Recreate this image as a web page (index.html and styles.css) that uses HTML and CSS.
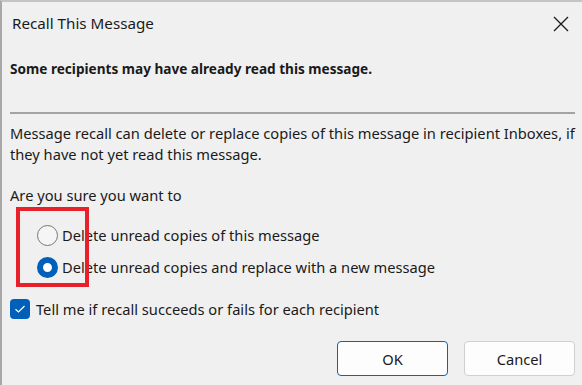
FILE: index.html
```html
<!DOCTYPE html>
<html lang="en">
<head>
    <meta charset="UTF-8">
    <title>Recall This Message</title>
    <link rel="stylesheet" href="styles.css">
</head>
<body>
    <div class="dialog">
        <!-- Title bar -->
        <div class="title-bar">
            <span class="title">Recall This Message</span>
            <svg class="close" width="16" height="16" viewBox="0 0 16 16">
                <path d="M1 1 L15 15 M15 1 L1 15" stroke="#1a1a1a" stroke-width="1.3" fill="none"/>
            </svg>
        </div>

        <div class="content">
            <p class="warning">Some recipients may have already read this message.</p>
            <hr class="sep">
            <p class="info">Message recall can delete or replace copies of this message in recipient Inboxes, if they have not yet read this message.</p>

            <p class="question">Are you sure you want to</p>

            <div class="options">
                <label class="option">
                    <span class="radio"></span>
                    <span>Delete unread copies of this message</span>
                </label>
                <label class="option">
                    <span class="radio checked"></span>
                    <span>Delete unread copies and replace with a new message</span>
                </label>
                <div class="highlight"></div>
            </div>

            <label class="check-row">
                <span class="checkbox">
                    <svg width="12" height="10" viewBox="0 0 12 10">
                        <path d="M1.5 5.2 L4.5 8 L10.5 2" stroke="#fff" stroke-width="1.2" fill="none"/>
                    </svg>
                </span>
                <span>Tell me if recall succeeds or fails for each recipient</span>
            </label>

            <div class="buttons">
                <button class="btn btn-default">OK</button>
                <button class="btn">Cancel</button>
            </div>
        </div>
    </div>
</body>
</html>
```

FILE: styles.css
```css
* {
    margin: 0;
    padding: 0;
    box-sizing: border-box;
}

body {
    font-family: "Noto Sans", "Open Sans", sans-serif;
    font-size: 14.67px;
    color: #1a1a1a;
    background-color: #f0f0f0;
}

.dialog {
    width: 582px;
    height: 385px;
    border-top: 2px solid #c4c4c4;
    border-left: 2px solid #a8a8a8;
    background-color: #f0f0f0;
}

.title-bar {
    display: flex;
    justify-content: space-between;
    align-items: center;
    height: 42px;
    padding: 0 13px 0 10px;
}

.title {
    font-size: 15.2px;
}

.close {
    margin-top: 2px;
}

.content {
    padding: 0 7px 0 8px;
}

.warning {
    font-weight: bold;
    font-size: 13.6px;
    margin-top: 15px;
    line-height: 20px;
}

.sep {
    border: none;
    border-top: 2px solid #a3a3a3;
    margin: 33px 0 0 0;
}

.info {
    margin-top: 9px;
    line-height: 21px;
}

.question {
    margin-top: 20px;
    line-height: 20px;
}

.options {
    position: relative;
    margin-top: 14px;
    padding-left: 27px;
}

.option {
    display: flex;
    align-items: center;
    gap: 4px;
    height: 32px;
}

.radio {
    width: 21px;
    height: 21px;
    border-radius: 50%;
    border: 1.2px solid #777;
    background-color: #f5f5f5;
}

.radio.checked {
    border: 6px solid #005fb8;
    background-color: #fff;
}

.highlight {
    position: absolute;
    left: 6px;
    top: -12px;
    width: 73px;
    height: 80px;
    border: 4px solid #e8202a;
}

.check-row {
    display: flex;
    align-items: center;
    gap: 6px;
    margin-top: 15px;
    height: 22px;
}

.checkbox {
    display: flex;
    align-items: center;
    justify-content: center;
    width: 20px;
    height: 20px;
    border-radius: 4px;
    background-color: #005fb8;
}

.buttons {
    display: flex;
    justify-content: flex-end;
    gap: 16px;
    margin-top: 21px;
}

.btn {
    width: 111px;
    height: 35px;
    font-family: inherit;
    font-size: 14.67px;
    color: #1a1a1a;
    background-color: #fdfdfd;
    border: 1px solid #d0d0d0;
    border-radius: 4px;
}

.btn-default {
    border: 1.5px solid #0067c0;
}
```
